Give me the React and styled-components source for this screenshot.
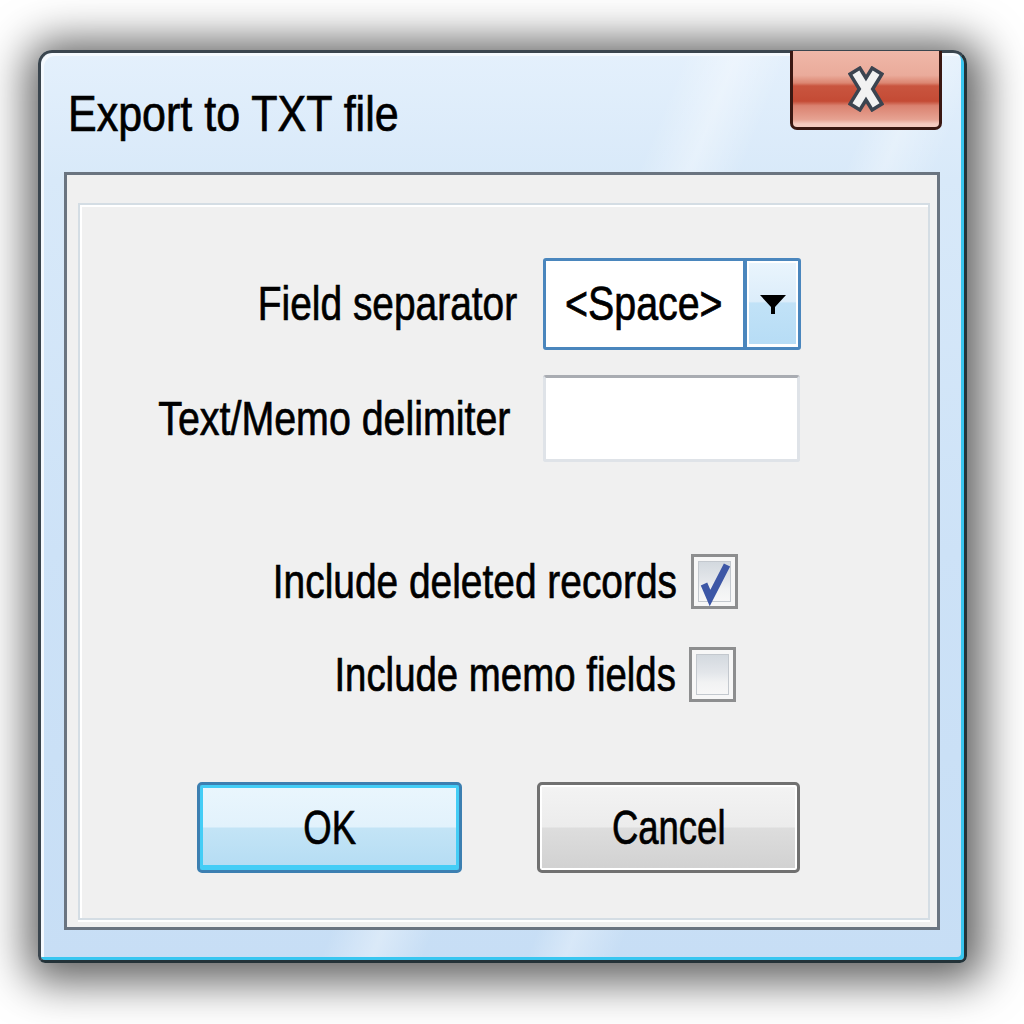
import React from 'react'
import styled, { createGlobalStyle } from 'styled-components'

const GlobalStyle = createGlobalStyle`
  html, body {
    margin: 0;
    padding: 0;
    background: #ffffff;
  }
  body {
    font-family: "Liberation Sans", Arial, sans-serif;
  }
`

const Page = styled.div`
  width: 1024px;
  height: 1024px;
  box-sizing: border-box;
  padding: 50px 57px 61px 38px;
  display: flex;
  overflow: hidden;
`

const Window = styled.div`
  flex: 1;
  box-sizing: border-box;
  display: flex;
  flex-direction: column;
  border: 3px solid #3a454e;
  border-right-color: #233238;
  border-bottom-color: #233238;
  border-radius: 14px 14px 7px 7px;
  background:
    linear-gradient(112deg, transparent 50%, rgba(255,255,255,.35) 54%, transparent 58%, transparent 66%, rgba(255,255,255,.3) 69%, transparent 73%),
    linear-gradient(to bottom, #e4f0fc 0%, #d8e9f9 14%, #cde2f7 55%, #c7def5 100%);
  box-shadow:
    inset -3px -3px 0 #38c6f0,
    inset 3px 3px 0 #f4f9fe,
    3px 5px 44px 14px rgba(0, 0, 0, .62);
`

const TitleBar = styled.div`
  height: 119px;
  flex-shrink: 0;
  display: flex;
  justify-content: space-between;
  align-items: flex-start;
  padding: 0 22px 0 27px;
`

const Title = styled.div`
  margin-top: 36px;
`

const Txt = styled.span`
  display: inline-block;
  font-size: ${p => p.size || 48}px;
  line-height: 1;
  white-space: nowrap;
  color: #000000;
  -webkit-text-stroke: 0.7px #000000;
  transform: scaleX(${p => p.sx || 0.82});
  transform-origin: ${p => p.origin || 'center'};
`

const CloseButton = styled.div`
  width: 152px;
  height: 79px;
  margin-top: -2px;
  box-sizing: border-box;
  border: 3px solid #3a1812;
  border-top: 0;
  border-radius: 0 0 7px 7px;
  background: linear-gradient(to bottom,
    #efb7a8 0%, #eaab9b 32%, #dc8672 42%, #c9553f 46%, #c44b35 66%,
    #da8270 72%, #e6a292 90%, #f5cbc0 96%, #f5cbc0 100%);
  display: flex;
  align-items: center;
  justify-content: center;
`

const Client = styled.div`
  flex: 1;
  display: flex;
  margin: 0 24px 30px 23px;
  border: 3px solid #6a7480;
  background: #f0f0f0;
  padding: 28px 7px 7px 11px;
`

const Panel = styled.div`
  flex: 1;
  display: flex;
  flex-direction: column;
  border: 2px solid #d4dde4;
  box-shadow: inset 2px 2px 0 #ffffff, 0 2px 0 #ffffff;
`

const FieldRow = styled.div`
  display: grid;
  grid-template-columns: 437px auto;
  column-gap: 26px;
  align-items: center;
  margin-top: ${p => p.top}px;
`

const FieldLabel = styled.div`
  display: flex;
  justify-content: flex-end;
  padding-right: ${p => p.inset || 0}px;
`

const Combo = styled.div`
  width: 258px;
  height: 92px;
  box-sizing: border-box;
  display: flex;
  border: 3px solid #4a86bd;
  border-radius: 3px;
  background: #ffffff;
`

const ComboValue = styled.div`
  flex: 1;
  min-width: 0;
  display: flex;
  align-items: center;
  padding-left: 19px;
`

const ComboButton = styled.div`
  width: 51px;
  flex-shrink: 0;
  border-left: 4px solid #4a86bd;
  box-shadow: inset 2px 2px 0 #ffffff, inset -2px -3px 0 #ffffff;
  background: linear-gradient(to bottom, #eaf5fd 0%, #dcedfa 47%, #c1e2f7 49%, #b6dcf5 100%);
  display: flex;
  align-items: center;
  justify-content: center;
`

const TextInput = styled.div`
  width: 257px;
  height: 87px;
  box-sizing: border-box;
  border: 3px solid #dfe3e8;
  border-top-color: #a9acb2;
  border-radius: 3px;
  background: #ffffff;
`

const CheckRow = styled.div`
  display: flex;
  justify-content: flex-end;
  align-items: center;
  gap: ${p => p.gap}px;
  padding-right: ${p => p.pr}px;
  margin-top: ${p => p.top}px;
`

const CheckBox = styled.div`
  width: 47px;
  height: 55px;
  box-sizing: border-box;
  border: 3px solid #8d8e8f;
  background: #f7f7f7;
  padding: 4px;
  display: flex;
`

const CheckInner = styled.div`
  flex: 1;
  display: flex;
  border: 1px solid #c3c8ce;
  background: linear-gradient(to bottom, #d3d9df 0%, #e3e6ea 45%, #f1f2f3 70%, #f7f7f7 100%);
`

const CheckSvg = styled.svg`
  overflow: visible;
`

const ButtonRow = styled.div`
  display: flex;
  gap: 75px;
  padding-left: 117px;
  margin-top: 80px;
`

const Button = styled.div`
  width: ${p => p.w}px;
  height: 91px;
  box-sizing: border-box;
  border: 3px solid ${p => (p.primary ? '#3c7fb1' : '#707070')};
  border-radius: 5px;
  display: flex;
  align-items: center;
  justify-content: center;
  background: ${p => p.primary
    ? 'linear-gradient(to bottom, #eaf6fd 0%, #e2f2fc 49%, #c3e4f6 51%, #b4dcf3 100%)'
    : 'linear-gradient(to bottom, #f3f3f3 0%, #ececec 49%, #dddddd 51%, #d1d1d1 100%)'};
  box-shadow: ${p => p.primary
    ? 'inset 0 0 0 3px #44cdf6, inset 0 -2px 0 3px #44cdf6'
    : 'inset 0 0 0 2px #ffffff'};
`

const CloseGlyph = () => (
  <svg width="36" height="46" viewBox="0 0 36 46">
    <path d="M10 10 L26 36 M26 10 L10 36" stroke="#3b4450" strokeWidth="15" strokeLinecap="square" fill="none" />
    <path d="M10 10 L26 36 M26 10 L10 36" stroke="#f2f2f2" strokeWidth="8" strokeLinecap="square" fill="none" />
  </svg>
)

const Arrow = () => (
  <svg width="26" height="19" viewBox="0 0 26 19">
    <polygon points="0,0 26,0 15,12 15,19 11,19 11,12" fill="#000" />
  </svg>
)

const Check = () => (
  <CheckSvg width="31" height="43" viewBox="0 0 31 43">
    <path d="M5 22 L11 36 L28 3" fill="none" stroke="#3d57a6" strokeWidth="7" />
  </CheckSvg>
)

export default function App() {
  return (
    <>
      <GlobalStyle />
      <Page>
        <Window>
          <TitleBar>
            <Title>
              <Txt size={50} sx={0.86} origin="left">Export to TXT file</Txt>
            </Title>
            <CloseButton>
              <CloseGlyph />
            </CloseButton>
          </TitleBar>
          <Client>
            <Panel>
              <FieldRow top={53}>
                <FieldLabel>
                  <Txt origin="right" sx={0.81}>Field separator</Txt>
                </FieldLabel>
                <Combo>
                  <ComboValue>
                    <Txt origin="left" sx={0.82}>&lt;Space&gt;</Txt>
                  </ComboValue>
                  <ComboButton>
                    <Arrow />
                  </ComboButton>
                </Combo>
              </FieldRow>
              <FieldRow top={25}>
                <FieldLabel inset={7}>
                  <Txt origin="right" sx={0.82}>Text/Memo delimiter</Txt>
                </FieldLabel>
                <TextInput />
              </FieldRow>
              <CheckRow top={92} gap={14} pr={190}>
                <Txt origin="right" sx={0.81}>Include deleted records</Txt>
                <CheckBox>
                  <CheckInner>
                    <Check />
                  </CheckInner>
                </CheckBox>
              </CheckRow>
              <CheckRow top={38} gap={13} pr={192}>
                <Txt origin="right" sx={0.8}>Include memo fields</Txt>
                <CheckBox>
                  <CheckInner />
                </CheckBox>
              </CheckRow>
              <ButtonRow>
                <Button primary w={265}>
                  <Txt sx={0.76}>OK</Txt>
                </Button>
                <Button w={263}>
                  <Txt sx={0.76}>Cancel</Txt>
                </Button>
              </ButtonRow>
            </Panel>
          </Client>
        </Window>
      </Page>
    </>
  )
}
